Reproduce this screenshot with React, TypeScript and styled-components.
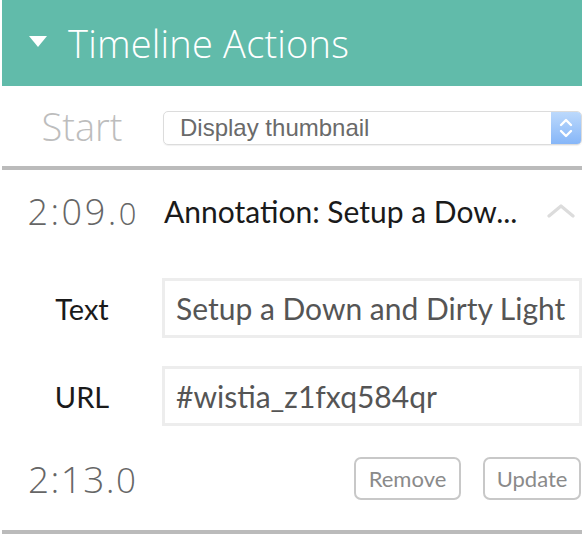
import React from "react";
import styled, { createGlobalStyle } from "styled-components";

const Global = createGlobalStyle`
  html, body { margin: 0; padding: 0; background: #fff; }
  body { font-family: "Lato", "Open Sans", sans-serif; }
  * { box-sizing: border-box; }
`;

const Panel = styled.div`
  width: 580px;
  margin-left: 2px;
  display: flex;
  flex-direction: column;
`;

const Header = styled.div`
  height: 86px;
  background: #61bbaa;
  display: flex;
  align-items: center;
  padding-left: 27px;
  gap: 21px;
  color: #fff;
  font-family: "Open Sans", sans-serif;
  font-weight: 300;
  font-size: 38px;
  letter-spacing: 0.2px;
`;

const Caret = styled.span`
  width: 0;
  height: 0;
  border-left: 9px solid transparent;
  border-right: 9px solid transparent;
  border-top: 11px solid #fff;
  margin-top: -4px;
`;

const Row = styled.div<{ $h: number }>`
  height: ${(p) => p.$h}px;
  display: grid;
  grid-template-columns: 160px 1fr;
  align-items: center;
`;

const Fields = styled.div`
  display: flex;
  flex-direction: column;
  gap: 28px;
  padding-top: 26px;
`;

const Label = styled.div`
  text-align: center;
  font-size: 29px;
  color: #1a1a1a;
`;

const Stamp = styled.div<{ $size: number; $color: string; $ls?: number }>`
  text-align: center;
  font-family: "Open Sans", sans-serif;
  font-weight: 300;
  font-size: ${(p) => p.$size}px;
  letter-spacing: ${(p) => p.$ls ?? 0}px;
  color: ${(p) => p.$color};
  white-space: nowrap;
`;

const Tenth = styled.span<{ $size: number }>`
  font-size: ${(p) => p.$size}px;
  letter-spacing: 0;
`;

const Divider = styled.div`
  height: 4px;
  background: #bbbbbb;
`;

const Select = styled.div`
  margin-left: 1px;
  margin-top: 4px;
  height: 34px;
  border: 1px solid #dcdcdc;
  border-radius: 5px;
  box-shadow: 0 1px 1px rgba(0, 0, 0, 0.06);
  display: flex;
  align-items: center;
  font-family: "Liberation Sans", Arial, sans-serif;
  font-size: 24px;
  color: #6a6a6a;
  overflow: hidden;
`;

const SelectText = styled.span`
  flex: 1;
  padding-left: 16px;
`;

const Stepper = styled.span`
  width: 30px;
  align-self: stretch;
  background: linear-gradient(#bcd9fc, #86b6f8);
  display: flex;
  align-items: center;
  justify-content: center;
`;

const TitleLine = styled.div`
  display: flex;
  align-items: center;
  justify-content: space-between;
  padding-left: 2px;
  padding-right: 7px;
`;

const Title = styled.span`
  font-size: 30px;
  color: #1a1a1a;
  white-space: nowrap;
`;

const FieldBox = styled.div`
  height: 60px;
  border: 3px solid #ededed;
  display: flex;
  align-items: center;
  padding-left: 11px;
  font-size: 30px;
  color: #555;
  white-space: nowrap;
  overflow: hidden;
`;

const Actions = styled.div`
  display: flex;
  justify-content: flex-end;
  gap: 22px;
  padding-right: 1px;
`;

const Button = styled.button<{ $w: number }>`
  width: ${(p) => p.$w}px;
  height: 43px;
  border: 2px solid #c8c8c8;
  border-radius: 7px;
  background: #fff;
  font-family: "Lato", sans-serif;
  font-size: 22px;
  color: #8a8a8a;
  padding: 0;
`;

export default function App() {
  return (
    <>
      <Global />
      <Panel>
        <Header>
          <Caret />
          <span>Timeline Actions</span>
        </Header>
        <Row $h={80}>
          <Stamp $size={38} $color="#bdbdbd">Start</Stamp>
          <Select>
            <SelectText>Display thumbnail</SelectText>
            <Stepper>
              <svg width="14" height="24" viewBox="0 0 14 24">
                <path d="M2 9 L7 4 L12 9 M2 15 L7 20 L12 15" fill="none" stroke="#fff" strokeWidth="2.4" strokeLinecap="round" strokeLinejoin="round" />
              </svg>
            </Stepper>
          </Select>
        </Row>
        <Divider />
        <Row $h={82}>
          <Stamp $size={36} $color="#666" $ls={2.5}>
            2:09.<Tenth $size={31}>0</Tenth>
          </Stamp>
          <TitleLine>
            <Title>Annotation: Setup a Dow...</Title>
            <svg width="28" height="16" viewBox="0 0 28 16">
              <path d="M2 13 L14 3 L26 13" fill="none" stroke="#dcdcdc" strokeWidth="3.2" strokeLinecap="round" strokeLinejoin="round" />
            </svg>
          </TitleLine>
        </Row>
        <Fields>
          <Row $h={60}>
            <Label>Text</Label>
            <FieldBox>Setup a Down and Dirty Light</FieldBox>
          </Row>
          <Row $h={60}>
            <Label>URL</Label>
            <FieldBox>#wistia_z1fxq584qr</FieldBox>
          </Row>
        </Fields>
        <Row $h={104}>
          <Stamp $size={37} $color="#666" $ls={1.4}>
            2:13.<Tenth $size={35}>0</Tenth>
          </Stamp>
          <Actions>
            <Button $w={107}>Remove</Button>
            <Button $w={98}>Update</Button>
          </Actions>
        </Row>
        <Divider />
      </Panel>
    </>
  );
}
